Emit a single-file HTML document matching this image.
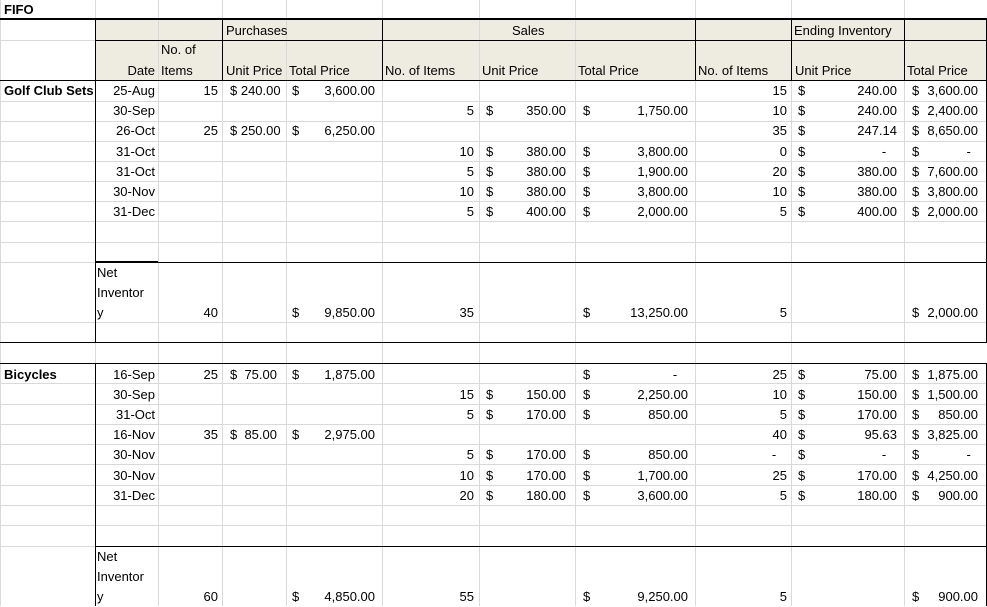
<!DOCTYPE html><html><head><meta charset="utf-8"><style>
body{margin:0;width:987px;height:606px;overflow:hidden;background:#fff;font-family:"Liberation Sans",Arial,sans-serif;font-size:13px;color:#000;position:relative}
.a{position:absolute}
.h{position:absolute;height:1px;background:#d9d9d9}
.v{position:absolute;width:1px;background:#d9d9d9}
.k{background:#000}
.r{position:absolute;top:0;height:20px;line-height:20px;white-space:nowrap}
.row{position:absolute;left:0;width:987px;height:20px}
.dt{right:832px}.it{right:769px}.pu{left:230px}.pd{left:292px}.pt{right:612px}
.si{right:513px}.sd{left:486px}.su{right:421px}.td{left:583px}.tt{right:299px}
.ei{right:200px}.ed{left:798px}.eu{right:90px}.fd{left:912px}.ft{right:9px}
b{font-weight:bold}
</style></head><body>
<div class="a" style="left:95px;top:20px;width:892px;height:60px;background:#eeece1"></div>
<div class="v" style="left:0;top:0;height:606px"></div>
<div class="v" style="left:95px;top:0;height:606px"></div>
<div class="v" style="left:158px;top:0;height:606px"></div>
<div class="v" style="left:222px;top:0;height:606px"></div>
<div class="v" style="left:286px;top:0;height:606px"></div>
<div class="v" style="left:382px;top:0;height:606px"></div>
<div class="v" style="left:479px;top:0;height:606px"></div>
<div class="v" style="left:575px;top:0;height:606px"></div>
<div class="v" style="left:695px;top:0;height:606px"></div>
<div class="v" style="left:791px;top:0;height:606px"></div>
<div class="v" style="left:904px;top:0;height:606px"></div>
<div class="h" style="left:0;width:987px;top:40px"></div>
<div class="h" style="left:0;width:987px;top:101px"></div>
<div class="h" style="left:0;width:987px;top:121px"></div>
<div class="h" style="left:0;width:987px;top:141px"></div>
<div class="h" style="left:0;width:987px;top:161px"></div>
<div class="h" style="left:0;width:987px;top:181px"></div>
<div class="h" style="left:0;width:987px;top:201px"></div>
<div class="h" style="left:0;width:987px;top:221px"></div>
<div class="h" style="left:0;width:987px;top:242px"></div>
<div class="h" style="left:0;width:987px;top:262px"></div>
<div class="h" style="left:0;width:987px;top:322px"></div>
<div class="h" style="left:0;width:987px;top:383px"></div>
<div class="h" style="left:0;width:987px;top:404px"></div>
<div class="h" style="left:0;width:987px;top:424px"></div>
<div class="h" style="left:0;width:987px;top:444px"></div>
<div class="h" style="left:0;width:987px;top:464px"></div>
<div class="h" style="left:0;width:987px;top:485px"></div>
<div class="h" style="left:0;width:987px;top:505px"></div>
<div class="h" style="left:0;width:987px;top:525px"></div>
<div class="h" style="left:0;width:987px;top:546px"></div>
<div class="a k" style="left:0;top:18px;width:987px;height:2px"></div>
<div class="a k" style="left:95px;top:40px;width:892px;height:1px"></div>
<div class="a k" style="left:0;top:80px;width:987px;height:1px"></div>
<div class="a k" style="left:95px;top:262px;width:892px;height:1px"></div>
<div class="a k" style="left:95px;top:261px;width:63px;height:2px"></div>
<div class="a k" style="left:0;top:342px;width:987px;height:1px"></div>
<div class="a k" style="left:0;top:363px;width:987px;height:1px"></div>
<div class="a k" style="left:95px;top:546px;width:892px;height:1px"></div>
<div class="a k" style="left:95px;top:20px;width:1px;height:322px"></div>
<div class="a k" style="left:95px;top:363px;width:1px;height:243px"></div>
<div class="a k" style="left:986px;top:20px;width:1px;height:322px"></div>
<div class="a k" style="left:986px;top:363px;width:1px;height:243px"></div>
<div class="a k" style="left:222px;top:20px;width:1px;height:60px"></div>
<div class="a k" style="left:382px;top:20px;width:1px;height:60px"></div>
<div class="a k" style="left:695px;top:20px;width:1px;height:60px"></div>
<div class="a k" style="left:791px;top:20px;width:1px;height:60px"></div>
<div class="a k" style="left:904px;top:20px;width:1px;height:60px"></div>

<div class="row" style="top:0"><span class="r" style="left:4px"><b>FIFO</b></span></div>
<div class="row" style="top:21px"><span class="r" style="left:226px">Purchases</span><span class="r" style="left:512px">Sales</span><span class="r" style="left:794px">Ending Inventory</span></div>
<div class="row" style="top:40px"><span class="r" style="left:161px">No. of</span></div>
<div class="row" style="top:61px"><span class="r dt">Date</span><span class="r" style="left:161px">Items</span><span class="r" style="left:226px">Unit Price</span><span class="r" style="left:289px">Total Price</span><span class="r" style="left:385px">No. of Items</span><span class="r" style="left:482px">Unit Price</span><span class="r" style="left:578px">Total Price</span><span class="r" style="left:698px">No. of Items</span><span class="r" style="left:795px">Unit Price</span><span class="r" style="left:907px">Total Price</span></div>

<div class="row" style="top:81px"><span class="r" style="left:4px"><b>Golf Club Sets</b></span><span class="r dt">25-Aug</span><span class="r it">15</span><span class="r pu">$ 240.00</span><span class="r pd">$</span><span class="r pt">3,600.00</span><span class="r ei">15</span><span class="r ed">$</span><span class="r eu">240.00</span><span class="r fd">$</span><span class="r ft">3,600.00</span></div>
<div class="row" style="top:101px"><span class="r dt">30-Sep</span><span class="r si">5</span><span class="r sd">$</span><span class="r su">350.00</span><span class="r td">$</span><span class="r tt">1,750.00</span><span class="r ei">10</span><span class="r ed">$</span><span class="r eu">240.00</span><span class="r fd">$</span><span class="r ft">2,400.00</span></div>
<div class="row" style="top:121px"><span class="r dt">26-Oct</span><span class="r it">25</span><span class="r pu">$ 250.00</span><span class="r pd">$</span><span class="r pt">6,250.00</span><span class="r ei">35</span><span class="r ed">$</span><span class="r eu">247.14</span><span class="r fd">$</span><span class="r ft">8,650.00</span></div>
<div class="row" style="top:142px"><span class="r dt">31-Oct</span><span class="r si">10</span><span class="r sd">$</span><span class="r su">380.00</span><span class="r td">$</span><span class="r tt">3,800.00</span><span class="r ei">0</span><span class="r ed">$</span><span class="r eu">-&nbsp;&nbsp;&nbsp;</span><span class="r fd">$</span><span class="r ft">-&nbsp;&nbsp;</span></div>
<div class="row" style="top:162px"><span class="r dt">31-Oct</span><span class="r si">5</span><span class="r sd">$</span><span class="r su">380.00</span><span class="r td">$</span><span class="r tt">1,900.00</span><span class="r ei">20</span><span class="r ed">$</span><span class="r eu">380.00</span><span class="r fd">$</span><span class="r ft">7,600.00</span></div>
<div class="row" style="top:182px"><span class="r dt">30-Nov</span><span class="r si">10</span><span class="r sd">$</span><span class="r su">380.00</span><span class="r td">$</span><span class="r tt">3,800.00</span><span class="r ei">10</span><span class="r ed">$</span><span class="r eu">380.00</span><span class="r fd">$</span><span class="r ft">3,800.00</span></div>
<div class="row" style="top:202px"><span class="r dt">31-Dec</span><span class="r si">5</span><span class="r sd">$</span><span class="r su">400.00</span><span class="r td">$</span><span class="r tt">2,000.00</span><span class="r ei">5</span><span class="r ed">$</span><span class="r eu">400.00</span><span class="r fd">$</span><span class="r ft">2,000.00</span></div>

<div class="row" style="top:263px"><span class="r" style="left:97px">Net</span></div>
<div class="row" style="top:283px"><span class="r" style="left:97px">Inventor</span></div>
<div class="row" style="top:303px"><span class="r" style="left:97px">y</span><span class="r it">40</span><span class="r pd">$</span><span class="r pt">9,850.00</span><span class="r si">35</span><span class="r td">$</span><span class="r tt">13,250.00</span><span class="r ei">5</span><span class="r fd">$</span><span class="r ft">2,000.00</span></div>

<div class="row" style="top:365px"><span class="r" style="left:4px"><b>Bicycles</b></span><span class="r dt">16-Sep</span><span class="r it">25</span><span class="r pu">$&nbsp;&nbsp;75.00</span><span class="r pd">$</span><span class="r pt">1,875.00</span><span class="r td">$</span><span class="r tt">-&nbsp;&nbsp;&nbsp;</span><span class="r ei">25</span><span class="r ed">$</span><span class="r eu">75.00</span><span class="r fd">$</span><span class="r ft">1,875.00</span></div>
<div class="row" style="top:385px"><span class="r dt">30-Sep</span><span class="r si">15</span><span class="r sd">$</span><span class="r su">150.00</span><span class="r td">$</span><span class="r tt">2,250.00</span><span class="r ei">10</span><span class="r ed">$</span><span class="r eu">150.00</span><span class="r fd">$</span><span class="r ft">1,500.00</span></div>
<div class="row" style="top:405px"><span class="r dt">31-Oct</span><span class="r si">5</span><span class="r sd">$</span><span class="r su">170.00</span><span class="r td">$</span><span class="r tt">850.00</span><span class="r ei">5</span><span class="r ed">$</span><span class="r eu">170.00</span><span class="r fd">$</span><span class="r ft">850.00</span></div>
<div class="row" style="top:425px"><span class="r dt">16-Nov</span><span class="r it">35</span><span class="r pu">$&nbsp;&nbsp;85.00</span><span class="r pd">$</span><span class="r pt">2,975.00</span><span class="r ei">40</span><span class="r ed">$</span><span class="r eu">95.63</span><span class="r fd">$</span><span class="r ft">3,825.00</span></div>
<div class="row" style="top:445px"><span class="r dt">30-Nov</span><span class="r si">5</span><span class="r sd">$</span><span class="r su">170.00</span><span class="r td">$</span><span class="r tt">850.00</span><span class="r ei">-&nbsp;&nbsp;&nbsp;</span><span class="r ed">$</span><span class="r eu">-&nbsp;&nbsp;&nbsp;</span><span class="r fd">$</span><span class="r ft">-&nbsp;&nbsp;</span></div>
<div class="row" style="top:466px"><span class="r dt">30-Nov</span><span class="r si">10</span><span class="r sd">$</span><span class="r su">170.00</span><span class="r td">$</span><span class="r tt">1,700.00</span><span class="r ei">25</span><span class="r ed">$</span><span class="r eu">170.00</span><span class="r fd">$</span><span class="r ft">4,250.00</span></div>
<div class="row" style="top:486px"><span class="r dt">31-Dec</span><span class="r si">20</span><span class="r sd">$</span><span class="r su">180.00</span><span class="r td">$</span><span class="r tt">3,600.00</span><span class="r ei">5</span><span class="r ed">$</span><span class="r eu">180.00</span><span class="r fd">$</span><span class="r ft">900.00</span></div>

<div class="row" style="top:547px"><span class="r" style="left:97px">Net</span></div>
<div class="row" style="top:567px"><span class="r" style="left:97px">Inventor</span></div>
<div class="row" style="top:587px"><span class="r" style="left:97px">y</span><span class="r it">60</span><span class="r pd">$</span><span class="r pt">4,850.00</span><span class="r si">55</span><span class="r td">$</span><span class="r tt">9,250.00</span><span class="r ei">5</span><span class="r fd">$</span><span class="r ft">900.00</span></div>
</body></html>
